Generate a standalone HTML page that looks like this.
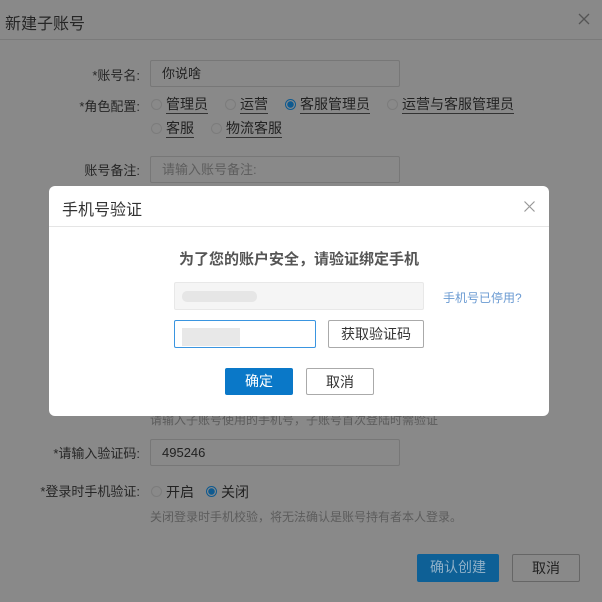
<!DOCTYPE html>
<html><head><meta charset="utf-8"><style>
*{margin:0;padding:0;box-sizing:border-box}
body{width:602px;height:602px;background:#898989;position:relative;overflow:hidden;font-family:"Liberation Sans","Noto Sans CJK SC",sans-serif;font-size:13px;color:#222}
.a{position:absolute;white-space:nowrap}
.lbl{text-align:right;width:140px;left:0;color:#262626}
.inp{position:absolute;border:1px solid #777;border-radius:2px;background:#898989;height:27px;padding-left:11px;line-height:25px}
.r{position:absolute;width:11px;height:11px;border:1px solid #7c7c7c;border-radius:50%}
.r.on{border-color:#0e5a90;background:radial-gradient(circle,#0e5a90 3px,#898989 3.5px)}
.u{border-bottom:1px solid #333;line-height:18px;font-size:14px}
.hint{color:#5c5c5c;font-size:12px}
.btn{position:absolute;text-align:center;border-radius:2px;line-height:26px;font-size:14px}
</style></head><body>
<div class="a" style="left:5px;top:10px;font-size:16px;color:#262626">新建子账号</div>
<svg class="a" style="left:578px;top:13px" width="12" height="12"><path d="M1 1L11 11M11 1L1 11" stroke="#555" stroke-width="1.3"/></svg>
<div class="a" style="left:0;top:39px;width:602px;height:1px;background:#7a7a7a"></div>

<div class="a lbl" style="top:65px">*账号名:</div>
<div class="inp" style="left:150px;top:60px;width:250px">你说啥</div>
<div class="a lbl" style="top:96px;">*角色配置:</div>
<div class="r" style="left:151px;top:99px"></div><div class="a u" style="left:166px;top:95px">管理员</div>
<div class="r" style="left:225px;top:99px"></div><div class="a u" style="left:240px;top:95px">运营</div>
<div class="r on" style="left:285px;top:99px"></div><div class="a u" style="left:300px;top:95px">客服管理员</div>
<div class="r" style="left:387px;top:99px"></div><div class="a u" style="left:402px;top:95px">运营与客服管理员</div>
<div class="r" style="left:151px;top:123px"></div><div class="a u" style="left:166px;top:119px">客服</div>
<div class="r" style="left:211px;top:123px"></div><div class="a u" style="left:226px;top:119px">物流客服</div>
<div class="a lbl" style="top:160px">账号备注:</div>
<div class="inp" style="left:150px;top:156px;width:250px;color:#5e5e5e">请输入账号备注:</div>

<div class="a hint" style="left:150px;top:411px">请输入子账号使用的手机号，子账号首次登陆时需验证</div>
<div class="a lbl" style="top:443px">*请输入验证码:</div>
<div class="inp" style="left:150px;top:439px;width:250px">495246</div>
<div class="a lbl" style="top:481px">*登录时手机验证:</div>
<div class="r" style="left:151px;top:486px"></div><div class="a" style="left:166px;top:482px;font-size:14px">开启</div>
<div class="r on" style="left:206px;top:486px"></div><div class="a" style="left:221px;top:482px;font-size:14px">关闭</div>
<div class="a hint" style="left:150px;top:508px">关闭登录时手机校验，将无法确认是账号持有者本人登录。</div>
<div class="btn" style="left:417px;top:554px;width:82px;height:28px;background:#0e6096;color:#8fb0c8">确认创建</div>
<div class="btn" style="left:512px;top:554px;width:68px;height:28px;border:1px solid #666;color:#222">取消</div>

<div class="a" style="left:49px;top:186px;width:500px;height:230px;background:#fff;border-radius:6px">
<div class="a" style="left:13px;top:10px;font-size:16px;color:#333">手机号验证</div>
<svg class="a" style="left:475px;top:15px" width="11" height="11"><path d="M0.5 0.5L10.5 10.5M10.5 0.5L0.5 10.5" stroke="#999" stroke-width="1.2"/></svg>
<div class="a" style="left:0;top:40px;width:500px;height:1px;background:#e5e5e5"></div>
<div class="a" style="left:130px;top:62px;font-size:15px;font-weight:bold;color:#555">为了您的账户安全，请验证绑定手机</div>
<div class="a" style="left:125px;top:96px;width:250px;height:28px;background:#f5f5f5;border:1px solid #e8e8e8;border-radius:2px"></div>
<div class="a" style="left:133px;top:105px;width:75px;height:11px;background:#e6e6e6;border-radius:5px"></div>
<div class="a" style="left:394px;top:103px;font-size:12px;color:#6a9ad2">手机号已停用?</div>
<div class="a" style="left:125px;top:134px;width:142px;height:28px;border:1px solid #3a95e0;border-radius:2px"></div>
<div class="a" style="left:133px;top:142px;width:58px;height:18px;background:#e8e8e8"></div>
<div class="a" style="left:279px;top:134px;width:96px;height:28px;border:1px solid #aaa;border-radius:2px;text-align:center;line-height:26px;font-size:14px;color:#333">获取验证码</div>
<div class="btn" style="left:176px;top:182px;width:68px;height:27px;background:#0a78c8;color:#fff">确定</div>
<div class="btn" style="left:257px;top:182px;width:68px;height:27px;border:1px solid #aaa;color:#333">取消</div>
</div>
</body></html>
